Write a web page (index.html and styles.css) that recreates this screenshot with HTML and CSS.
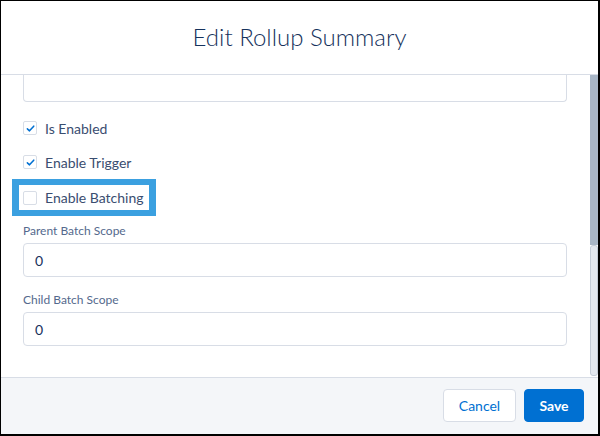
FILE: index.html
```html
<!DOCTYPE html>
<html>
<head>
<meta charset="utf-8">
<link rel="stylesheet" href="styles.css">
</head>
<body>
<div class="modal">
  <header class="modal-header">
    <h2 class="title">Edit Rollup Summary</h2>
  </header>
  <div class="modal-body">
    <div class="content">
      <div class="field-tail"></div>
      <label class="check-row">
        <span class="box checked"><svg viewBox="0 0 10 10" width="9" height="9"><path d="M1.5 5.4 L3.9 7.6 L8.6 2.4" fill="none" stroke="#0070d2" stroke-width="1.7" stroke-linecap="round" stroke-linejoin="round"/></svg></span>
        <span class="check-text">Is Enabled</span>
      </label>
      <label class="check-row">
        <span class="box checked"><svg viewBox="0 0 10 10" width="9" height="9"><path d="M1.5 5.4 L3.9 7.6 L8.6 2.4" fill="none" stroke="#0070d2" stroke-width="1.7" stroke-linecap="round" stroke-linejoin="round"/></svg></span>
        <span class="check-text">Enable Trigger</span>
      </label>
      <label class="check-row highlight">
        <span class="box"></span>
        <span class="check-text">Enable Batching</span>
      </label>
      <div class="field first">
        <div class="field-label">Parent Batch Scope</div>
        <div class="input">0</div>
      </div>
      <div class="field">
        <div class="field-label">Child Batch Scope</div>
        <div class="input">0</div>
      </div>
    </div>
    <div class="scrollbar">
      <div class="thumb"></div>
      <div class="track"></div>
    </div>
  </div>
  <footer class="modal-footer">
    <button class="btn neutral">Cancel</button>
    <button class="btn brand">Save</button>
  </footer>
</div>
</body>
</html>
```

FILE: styles.css
```css
* { box-sizing: border-box; }
html, body { margin: 0; padding: 0; }
body {
  width: 600px;
  height: 436px;
  font-family: "Lato", "Open Sans", sans-serif;
  background: #fff;
}
.modal {
  width: 600px;
  height: 436px;
  border-style: solid;
  border-color: #000;
  border-width: 1px 2px 2px 1px;
  display: flex;
  flex-direction: column;
  background: #fff;
}
.modal-header {
  height: 74px;
  border-bottom: 1px solid #d8dde6;
  display: flex;
  align-items: center;
  justify-content: center;
  flex: none;
}
.title {
  margin: 0;
  font-weight: 300;
  font-size: 24px;
  color: #16325c;
  padding-bottom: 2px;
}
.modal-body {
  height: 302px;
  flex: none;
  display: flex;
}
.content {
  flex: 1;
  padding-left: 22px;
  overflow: hidden;
}
.field-tail {
  width: 544px;
  height: 27px;
  border: 1px solid #d8dde6;
  border-top: none;
  border-radius: 0 0 4px 4px;
}
.check-row {
  display: flex;
  align-items: center;
  height: 34px;
}
.check-row:first-of-type { margin-top: 9px; }
.box {
  width: 14px;
  height: 14px;
  border: 1px solid #d8dde6;
  border-radius: 2px;
  background: #fff;
  display: flex;
  align-items: center;
  justify-content: center;
  flex: none;
}
.check-text {
  margin-left: 8px;
  font-size: 14px;
  color: #3a4d70;
}
.highlight {
  width: max-content;
  height: 37px;
  margin-left: -11px;
  border: solid #3ba0e0;
  border-width: 6px 7px;
  padding: 0 5px 0 4px;
}
.field-label {
  font-size: 12px;
  line-height: 18px;
  color: #54698d;
}
.field.first { margin-top: 6px; }
.field { margin-top: 14px; }
.input {
  margin-top: 3px;
  width: 544px;
  height: 34px;
  border: 1px solid #d8dde6;
  border-radius: 4px;
  padding-left: 11px;
  display: flex;
  align-items: center;
  font-size: 14px;
  color: #16325c;
}
.scrollbar {
  width: 8px;
  flex: none;
  display: flex;
  flex-direction: column;
}
.thumb {
  height: 170px;
  background: #a8b6c6;
}
.track {
  flex: 1;
  background: #e3e8ef;
  border: 1px solid #c4ccd7;
  border-radius: 3px;
  margin-bottom: 1px;
}
.modal-footer {
  flex: 1;
  border-top: 1px solid #d8dde6;
  background: #f4f6f9;
  display: flex;
  justify-content: flex-end;
  align-items: center;
  gap: 8px;
  padding: 0 14px 2px 0;
}
.btn {
  height: 33px;
  border-radius: 4px;
  font-family: "Lato", "Open Sans", sans-serif;
  font-size: 14px;
  padding: 0;
  cursor: pointer;
}
.neutral {
  width: 73px;
  background: #fff;
  border: 1px solid #d8dde6;
  color: #0070d2;
}
.brand {
  width: 60px;
  background: #0070d2;
  border: 1px solid #0070d2;
  color: #fff;
  font-weight: 700;
}
```
